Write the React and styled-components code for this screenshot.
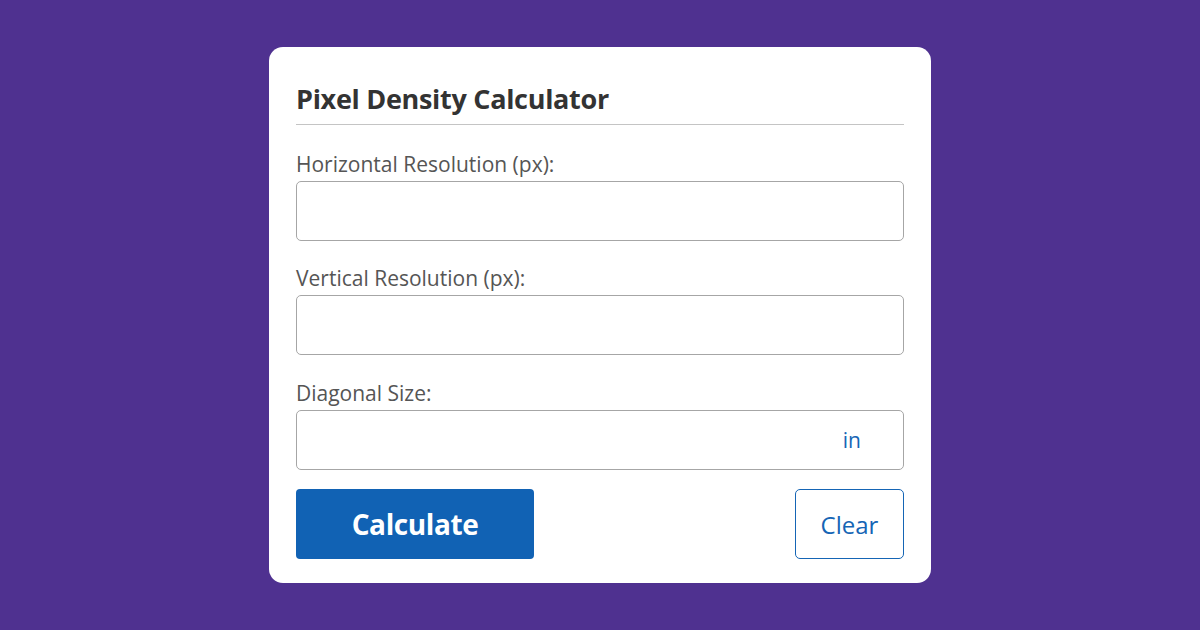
import React from "react";
import styled, { createGlobalStyle } from "styled-components";

const Global = createGlobalStyle`
  html, body { margin: 0; padding: 0; }
  body {
    background: #4f3190;
    font-family: "Open Sans", "Noto Sans", sans-serif;
  }
`;

const Page = styled.div`
  width: 1200px;
  height: 630px;
  display: flex;
  align-items: flex-start;
  justify-content: center;
  padding-top: 47px;
  box-sizing: border-box;
`;

const Card = styled.div`
  width: 662px;
  height: 536px;
  box-sizing: border-box;
  background: #ffffff;
  border-radius: 14px;
  padding: 34px 27px 24px;
  display: flex;
  flex-direction: column;
`;

const Title = styled.h1`
  margin: 0;
  font-size: 27px;
  line-height: 36px;
  font-weight: 700;
  color: #333333;
  padding-bottom: 7px;
  border-bottom: 1px solid #c4c4c4;
  letter-spacing: -0.3px;
`;

const Field = styled.div`
  display: flex;
  flex-direction: column;
  margin-top: ${(p) => p.$top}px;
`;

const Label = styled.label`
  font-size: 21px;
  line-height: 28px;
  color: #555555;
  margin-bottom: 3px;
  letter-spacing: 0;
`;

const InputBox = styled.div`
  height: 60px;
  box-sizing: border-box;
  border: 1px solid #a6a6a6;
  border-radius: 5px;
  display: flex;
  align-items: center;
  padding: 0 42px 0 12px;
`;

const Input = styled.input`
  flex: 1;
  border: none;
  outline: none;
  background: transparent;
  font-family: inherit;
  font-size: 20px;
  color: #333;
  min-width: 0;
`;

const Suffix = styled.span`
  font-size: 21px;
  color: #1565b5;
`;

const Actions = styled.div`
  display: flex;
  justify-content: space-between;
  margin-top: 19px;
`;

const PrimaryButton = styled.button`
  width: 238px;
  height: 70px;
  border: none;
  border-radius: 4px;
  background: #1162b4;
  color: #ffffff;
  font-family: inherit;
  font-size: 28px;
  font-weight: 700;
  letter-spacing: -0.4px;
  cursor: pointer;
`;

const SecondaryButton = styled.button`
  width: 109px;
  height: 70px;
  border: 1px solid #1565b5;
  border-radius: 5px;
  background: #ffffff;
  color: #1565b5;
  font-family: inherit;
  font-size: 24px;
  letter-spacing: 0;
  cursor: pointer;
`;

export default function App() {
  return (
    <>
      <Global />
      <Page>
        <Card>
          <Title>Pixel Density Calculator</Title>
          <Field $top={25}>
            <Label>Horizontal Resolution (px):</Label>
            <InputBox>
              <Input type="text" />
            </InputBox>
          </Field>
          <Field $top={23}>
            <Label>Vertical Resolution (px):</Label>
            <InputBox>
              <Input type="text" />
            </InputBox>
          </Field>
          <Field $top={24}>
            <Label>Diagonal Size:</Label>
            <InputBox>
              <Input type="text" />
              <Suffix>in</Suffix>
            </InputBox>
          </Field>
          <Actions>
            <PrimaryButton>Calculate</PrimaryButton>
            <SecondaryButton>Clear</SecondaryButton>
          </Actions>
        </Card>
      </Page>
    </>
  );
}
